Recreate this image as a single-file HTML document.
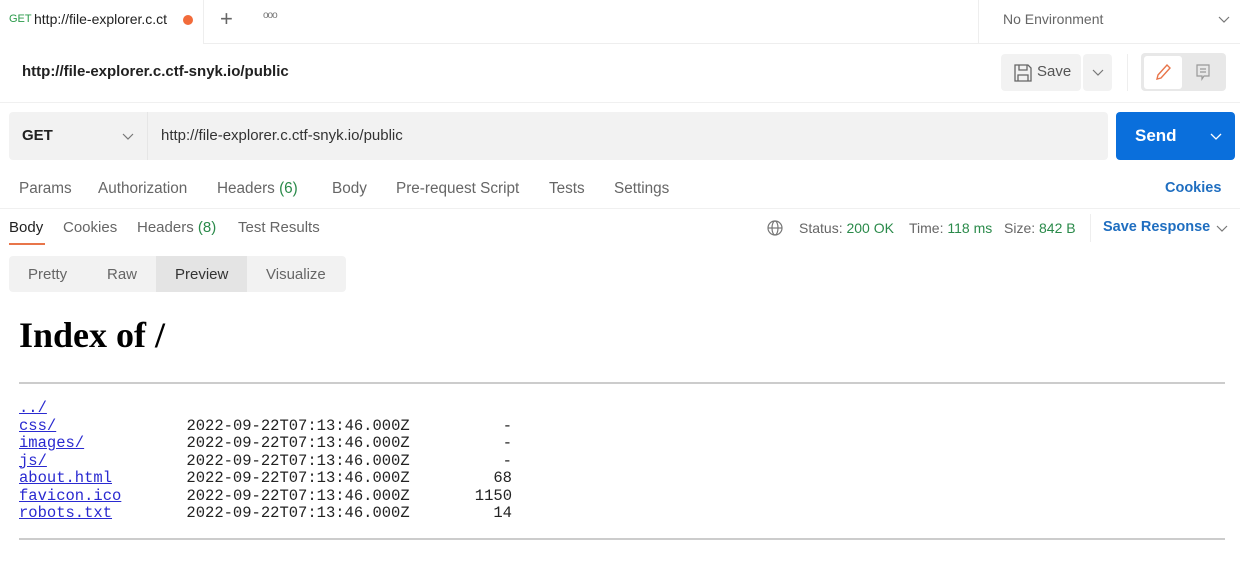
<!DOCTYPE html>
<html><head><meta charset="utf-8"><style>
*{margin:0;padding:0;box-sizing:border-box}
body{width:1240px;height:561px;overflow:hidden;background:#fff;font-family:"Liberation Sans",sans-serif;color:#212121;position:relative}
.a{position:absolute;white-space:nowrap}
.g{color:#666}
.gr{color:#2a8a4a}
.bl{color:#1f6ec0;font-weight:bold}
pre.a{font-family:"Liberation Mono",monospace;font-size:15.5px;line-height:17.55px;color:#222;white-space:pre}
pre a{color:#2a2ad0;text-decoration:underline}
.t{font-size:15.3px}
</style></head><body>
<!-- tab bar -->
<div class="a" style="left:0;top:0;width:1240px;height:44px;border-bottom:1px solid #eee"></div>
<div class="a" style="left:0;top:0;width:204px;height:44px;background:#fff;border-right:1px solid #eee"></div>
<div class="a" style="left:9px;top:13px;font-size:11px;color:#2a9a4a">GET</div>
<div class="a" style="left:34px;top:11px;font-size:14px">http://file-explorer.c.ct</div>
<div class="a" style="left:183px;top:15px;width:10px;height:10px;border-radius:5px;background:#f26b3a"></div>
<div class="a" style="left:220px;top:6px;font-size:22px;color:#666;font-weight:300">+</div>
<div class="a" style="left:263px;top:10px;font-size:10px;color:#777;letter-spacing:-1px">ooo</div>
<div class="a" style="left:978px;top:0;width:1px;height:44px;background:#eee"></div>
<div class="a g" style="left:1003px;top:11px;font-size:14px">No Environment</div>
<svg class="a" style="left:1218px;top:14px" width="12" height="10"><path d="M1 3l5 5 5-5" fill="none" stroke="#777" stroke-width="1.2"/></svg>
<!-- url header -->
<div class="a" style="left:22px;top:63px;font-size:15px;font-weight:bold">http://file-explorer.c.ctf-snyk.io/public</div>
<div class="a" style="left:1001px;top:54px;width:80px;height:37px;background:#f2f2f2;border-radius:4px"></div>
<svg class="a" style="left:1013px;top:63px" width="20" height="20"><path d="M2 2h13l3 3v13H2z M6 2v5h8V2 M5 18v-6h10v6" fill="none" stroke="#666" stroke-width="1.3"/></svg>
<div class="a g" style="left:1037px;top:63px;font-size:15px;color:#555">Save</div>
<div class="a" style="left:1083px;top:54px;width:29px;height:37px;background:#f2f2f2;border-radius:4px"></div>
<svg class="a" style="left:1092px;top:67px" width="12" height="10"><path d="M1 3l5 5 5-5" fill="none" stroke="#777" stroke-width="1.2"/></svg>
<div class="a" style="left:1127px;top:54px;width:1px;height:37px;background:#eee"></div>
<div class="a" style="left:1141px;top:53px;width:85px;height:38px;background:#e8e8e8;border-radius:4px"></div>
<div class="a" style="left:1144px;top:56px;width:38px;height:33px;background:#fff;border-radius:3px"></div>
<svg class="a" style="left:1154px;top:62px" width="18" height="20"><path d="M3 17l1-4L13 3l3 3-9 10z" fill="none" stroke="#e8754a" stroke-width="1.4"/></svg>
<svg class="a" style="left:1195px;top:63px" width="16" height="18"><path d="M2 2h12v11H9l-2 3v-3H2z M5 6h6 M5 9h6" fill="none" stroke="#999" stroke-width="1.2"/></svg>
<div class="a" style="left:0;top:102px;width:1240px;height:1px;background:#f0f0f0"></div>
<!-- request bar -->
<div class="a" style="left:9px;top:112px;width:1099px;height:48px;background:#f2f2f2;border-radius:4px"></div>
<div class="a" style="left:147px;top:112px;width:1px;height:48px;background:#e6e6e6"></div>
<div class="a" style="left:22px;top:127px;font-size:15px;font-weight:bold">GET</div>
<svg class="a" style="left:122px;top:131px" width="12" height="10"><path d="M1 3l5 5 5-5" fill="none" stroke="#777" stroke-width="1.2"/></svg>
<div class="a" style="left:161px;top:127px;font-size:15px;color:#333">http://file-explorer.c.ctf-snyk.io/public</div>
<div class="a" style="left:1116px;top:112px;width:119px;height:48px;background:#0a6fdc;border-radius:4px"></div>
<div class="a" style="left:1135px;top:126px;font-size:17px;font-weight:bold;color:#fff">Send</div>
<svg class="a" style="left:1210px;top:131px" width="12" height="10"><path d="M1 3l5 5 5-5" fill="none" stroke="#fff" stroke-width="1.3"/></svg>
<!-- request tabs -->
<div class="a g t" style="left:19px;top:180px">Params</div>
<div class="a g t" style="left:98px;top:180px">Authorization</div>
<div class="a g t" style="left:217px;top:180px">Headers <span class="gr">(6)</span></div>
<div class="a g t" style="left:332px;top:180px">Body</div>
<div class="a g t" style="left:396px;top:180px">Pre-request Script</div>
<div class="a g t" style="left:549px;top:180px">Tests</div>
<div class="a g t" style="left:614px;top:180px">Settings</div>
<div class="a bl" style="left:1165px;top:180px;font-size:14.5px">Cookies</div>
<div class="a" style="left:0;top:208px;width:1240px;height:1px;background:#f0f0f0"></div>
<!-- response tabs -->
<div class="a" style="left:9px;top:219px;font-size:15px">Body</div>
<div class="a" style="left:9px;top:243px;width:36px;height:2px;background:#e8754a"></div>
<div class="a g" style="left:63px;top:219px;font-size:15px">Cookies</div>
<div class="a g" style="left:137px;top:219px;font-size:15px">Headers <span class="gr">(8)</span></div>
<div class="a g" style="left:238px;top:219px;font-size:15px">Test Results</div>
<svg class="a" style="left:766px;top:219px" width="18" height="18"><circle cx="9" cy="9" r="7" fill="none" stroke="#777" stroke-width="1.2"/><ellipse cx="9" cy="9" rx="3" ry="7" fill="none" stroke="#777" stroke-width="1.2"/><path d="M2 9h14" stroke="#777" stroke-width="1.2"/></svg>
<div class="a g" style="left:799px;top:220px;font-size:14px">Status: <span class="gr">200 OK</span></div>
<div class="a g" style="left:909px;top:220px;font-size:14px">Time: <span class="gr">118 ms</span></div>
<div class="a g" style="left:1004px;top:220px;font-size:14px">Size: <span class="gr">842 B</span></div>
<div class="a" style="left:1090px;top:214px;width:1px;height:28px;background:#eee"></div>
<div class="a bl" style="left:1103px;top:219px;font-size:14.5px">Save Response</div>
<svg class="a" style="left:1216px;top:223px" width="12" height="10"><path d="M1 3l5 5 5-5" fill="none" stroke="#777" stroke-width="1.2"/></svg>
<!-- pretty etc -->
<div class="a" style="left:9px;top:256px;width:337px;height:36px;background:#f2f2f2;border-radius:4px"></div>
<div class="a" style="left:156px;top:256px;width:91px;height:36px;background:#e4e4e4"></div>
<div class="a g" style="left:28px;top:266px;font-size:15px">Pretty</div>
<div class="a g" style="left:107px;top:266px;font-size:15px">Raw</div>
<div class="a" style="left:175px;top:266px;font-size:15px;color:#333">Preview</div>
<div class="a g" style="left:266px;top:266px;font-size:15px">Visualize</div>
<!-- preview -->
<div class="a" style="left:19px;top:314px;font-family:'Liberation Serif',serif;font-size:36px;font-weight:bold;color:#000">Index of /</div>
<div class="a" style="left:19px;top:382px;width:1206px;height:2px;background:#ccc"></div>
<pre class="a" style="left:19px;top:400px"><a>../</a>
<a>css/</a>              2022-09-22T07:13:46.000Z          -
<a>images/</a>           2022-09-22T07:13:46.000Z          -
<a>js/</a>               2022-09-22T07:13:46.000Z          -
<a>about.html</a>        2022-09-22T07:13:46.000Z         68
<a>favicon.ico</a>       2022-09-22T07:13:46.000Z       1150
<a>robots.txt</a>        2022-09-22T07:13:46.000Z         14</pre>
<div class="a" style="left:19px;top:538px;width:1206px;height:2px;background:#ccc"></div>
</body></html>
